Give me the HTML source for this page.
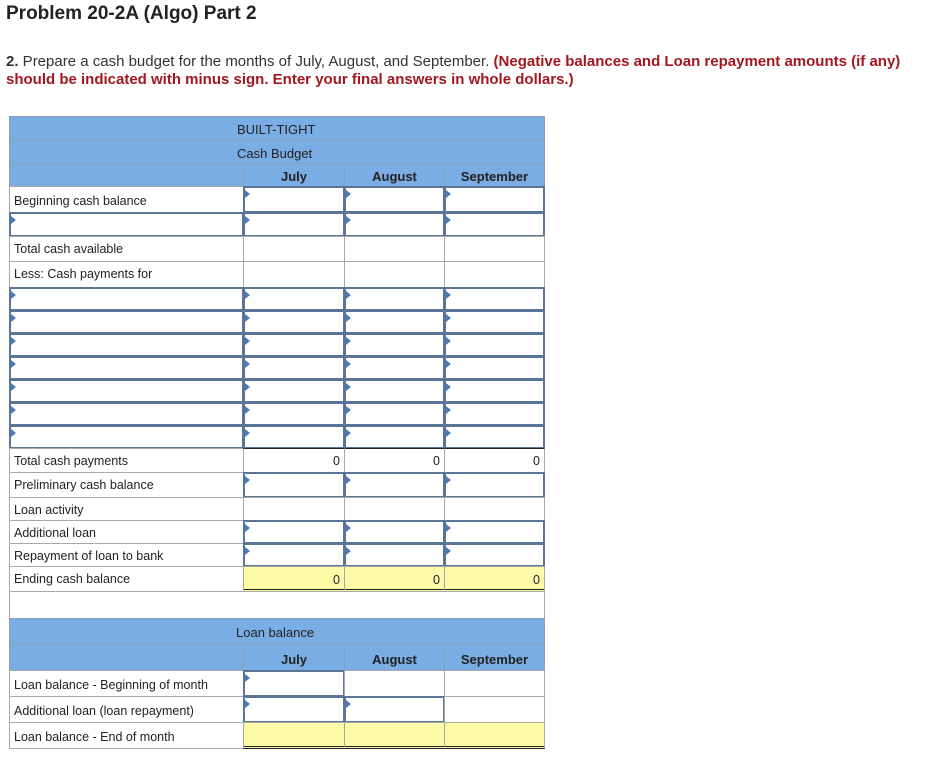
<!DOCTYPE html><html><head><meta charset="utf-8"><style>
body{margin:0;width:939px;height:757px;background:#fff;font-family:"Liberation Sans",Arial,sans-serif;color:#222;position:relative;overflow:hidden}
div{position:absolute;box-sizing:border-box}
.g{border:1px solid #a8a8a8;background:#fff;font-size:12.5px;line-height:1;padding:6px 0 0 4px;white-space:nowrap}
.h{background:#7aade4;border:1px solid #8aa0b8;font-size:13px;text-align:center;padding-top:5px}
.b{font-weight:bold}
.i{border:2px solid #5a7597;background:#fff}
.i:before{content:"";position:absolute;left:0;top:2px;border-left:5px solid #4a7ab8;border-top:4px solid transparent;border-bottom:4px solid transparent}
.y{background:#fdfaa8;border:1px solid #a8a8a8;border-bottom:3px double #222}
.n{text-align:right;padding:6px 4px 0 0}
</style></head><body>
<div style="left:6px;top:3px;font-size:19px;font-weight:bold;color:#222;white-space:nowrap">Problem 20-2A (Algo) Part 2</div>
<div style="left:6px;top:53px;font-size:15px;line-height:18px;width:932px;color:#333"><b>2.</b> Prepare a cash budget for the months of July, August, and September. <b style="color:#a3171e">(Negative balances and Loan repayment amounts (if any) should be indicated with minus sign. Enter your final answers in whole dollars.)</b></div>

<div class="h" style="left:9px;top:116px;width:536px;height:25px"><span style="position:absolute;left:227px;top:5px">BUILT-TIGHT</span></div>
<div class="h" style="left:9px;top:140px;width:536px;height:24px"><span style="position:absolute;left:227px;top:5px">Cash Budget</span></div>
<div class="h" style="left:9px;top:163px;width:235px;height:24px"></div>
<div class="h b" style="left:243px;top:163px;width:102px;height:24px">July</div>
<div class="h b" style="left:344px;top:163px;width:101px;height:24px">August</div>
<div class="h b" style="left:444px;top:163px;width:101px;height:24px">September</div>

<div class="g" style="left:9px;top:186px;width:235px;height:27px;padding-top:8px">Beginning cash balance</div>
<div class="i" style="left:243px;top:186px;width:102px;height:27px"></div>
<div class="i" style="left:344px;top:186px;width:101px;height:27px"></div>
<div class="i" style="left:444px;top:186px;width:101px;height:27px"></div>
<div class="i" style="left:9px;top:212px;width:235px;height:25px"></div>
<div class="i" style="left:243px;top:212px;width:102px;height:25px"></div>
<div class="i" style="left:344px;top:212px;width:101px;height:25px"></div>
<div class="i" style="left:444px;top:212px;width:101px;height:25px"></div>
<div class="g" style="left:9px;top:236px;width:235px;height:26px">Total cash available</div>
<div class="g" style="left:243px;top:236px;width:102px;height:26px"></div>
<div class="g" style="left:344px;top:236px;width:101px;height:26px"></div>
<div class="g" style="left:444px;top:236px;width:101px;height:26px"></div>
<div class="g" style="left:9px;top:261px;width:235px;height:27px">Less: Cash payments for</div>
<div class="g" style="left:243px;top:261px;width:102px;height:27px"></div>
<div class="g" style="left:344px;top:261px;width:101px;height:27px"></div>
<div class="g" style="left:444px;top:261px;width:101px;height:27px"></div>

<div class="i" style="left:9px;top:287px;width:235px;height:24px"></div><div class="i" style="left:243px;top:287px;width:102px;height:24px"></div><div class="i" style="left:344px;top:287px;width:101px;height:24px"></div><div class="i" style="left:444px;top:287px;width:101px;height:24px"></div>
<div class="i" style="left:9px;top:310px;width:235px;height:24px"></div><div class="i" style="left:243px;top:310px;width:102px;height:24px"></div><div class="i" style="left:344px;top:310px;width:101px;height:24px"></div><div class="i" style="left:444px;top:310px;width:101px;height:24px"></div>
<div class="i" style="left:9px;top:333px;width:235px;height:24px"></div><div class="i" style="left:243px;top:333px;width:102px;height:24px"></div><div class="i" style="left:344px;top:333px;width:101px;height:24px"></div><div class="i" style="left:444px;top:333px;width:101px;height:24px"></div>
<div class="i" style="left:9px;top:356px;width:235px;height:24px"></div><div class="i" style="left:243px;top:356px;width:102px;height:24px"></div><div class="i" style="left:344px;top:356px;width:101px;height:24px"></div><div class="i" style="left:444px;top:356px;width:101px;height:24px"></div>
<div class="i" style="left:9px;top:379px;width:235px;height:24px"></div><div class="i" style="left:243px;top:379px;width:102px;height:24px"></div><div class="i" style="left:344px;top:379px;width:101px;height:24px"></div><div class="i" style="left:444px;top:379px;width:101px;height:24px"></div>
<div class="i" style="left:9px;top:402px;width:235px;height:24px"></div><div class="i" style="left:243px;top:402px;width:102px;height:24px"></div><div class="i" style="left:344px;top:402px;width:101px;height:24px"></div><div class="i" style="left:444px;top:402px;width:101px;height:24px"></div>
<div class="i" style="left:9px;top:425px;width:235px;height:24px"></div><div class="i" style="left:243px;top:425px;width:102px;height:24px"></div><div class="i" style="left:344px;top:425px;width:101px;height:24px"></div><div class="i" style="left:444px;top:425px;width:101px;height:24px"></div>

<div class="g" style="left:9px;top:448px;width:235px;height:25px">Total cash payments</div>
<div class="g n" style="left:243px;top:448px;width:102px;height:25px;border-top:1px solid #222">0</div>
<div class="g n" style="left:344px;top:448px;width:101px;height:25px;border-top:1px solid #222">0</div>
<div class="g n" style="left:444px;top:448px;width:101px;height:25px;border-top:1px solid #222">0</div>
<div class="g" style="left:9px;top:472px;width:235px;height:26px">Preliminary cash balance</div>
<div class="i" style="left:243px;top:472px;width:102px;height:26px"></div>
<div class="i" style="left:344px;top:472px;width:101px;height:26px"></div>
<div class="i" style="left:444px;top:472px;width:101px;height:26px"></div>
<div class="g" style="left:9px;top:497px;width:235px;height:24px">Loan activity</div>
<div class="g" style="left:243px;top:497px;width:102px;height:24px"></div>
<div class="g" style="left:344px;top:497px;width:101px;height:24px"></div>
<div class="g" style="left:444px;top:497px;width:101px;height:24px"></div>
<div class="g" style="left:9px;top:520px;width:235px;height:24px">Additional loan</div>
<div class="i" style="left:243px;top:520px;width:102px;height:24px"></div>
<div class="i" style="left:344px;top:520px;width:101px;height:24px"></div>
<div class="i" style="left:444px;top:520px;width:101px;height:24px"></div>
<div class="g" style="left:9px;top:543px;width:235px;height:24px">Repayment of loan to bank</div>
<div class="i" style="left:243px;top:543px;width:102px;height:24px"></div>
<div class="i" style="left:344px;top:543px;width:101px;height:24px"></div>
<div class="i" style="left:444px;top:543px;width:101px;height:24px"></div>
<div class="g" style="left:9px;top:566px;width:235px;height:26px">Ending cash balance</div>
<div class="y n" style="left:243px;top:566px;width:102px;height:26px;font-size:12.5px">0</div>
<div class="y n" style="left:344px;top:566px;width:101px;height:26px;font-size:12.5px">0</div>
<div class="y n" style="left:444px;top:566px;width:101px;height:26px;font-size:12.5px">0</div>
<div class="g" style="left:9px;top:591px;width:536px;height:28px"></div>

<div class="h" style="left:9px;top:618px;width:536px;height:27px"><span style="position:absolute;left:226px;top:6px">Loan balance</span></div>
<div class="h" style="left:9px;top:644px;width:235px;height:27px"></div>
<div class="h b" style="left:243px;top:644px;width:102px;height:27px;padding-top:7px">July</div>
<div class="h b" style="left:344px;top:644px;width:101px;height:27px;padding-top:7px">August</div>
<div class="h b" style="left:444px;top:644px;width:101px;height:27px;padding-top:7px">September</div>
<div class="g" style="left:9px;top:670px;width:235px;height:27px;padding-top:8px">Loan balance - Beginning of month</div>
<div class="i" style="left:243px;top:670px;width:102px;height:27px"></div>
<div class="g" style="left:344px;top:670px;width:101px;height:27px"></div>
<div class="g" style="left:444px;top:670px;width:101px;height:27px"></div>
<div class="g" style="left:9px;top:696px;width:235px;height:27px;padding-top:8px">Additional loan (loan repayment)</div>
<div class="i" style="left:243px;top:696px;width:102px;height:27px"></div>
<div class="i" style="left:344px;top:696px;width:101px;height:27px"></div>
<div class="g" style="left:444px;top:696px;width:101px;height:27px"></div>
<div class="g" style="left:9px;top:722px;width:235px;height:27px;padding-top:8px">Loan balance - End of month</div>
<div class="y" style="left:243px;top:722px;width:102px;height:27px"></div>
<div class="y" style="left:344px;top:722px;width:101px;height:27px"></div>
<div class="y" style="left:444px;top:722px;width:101px;height:27px"></div>
</body></html>
